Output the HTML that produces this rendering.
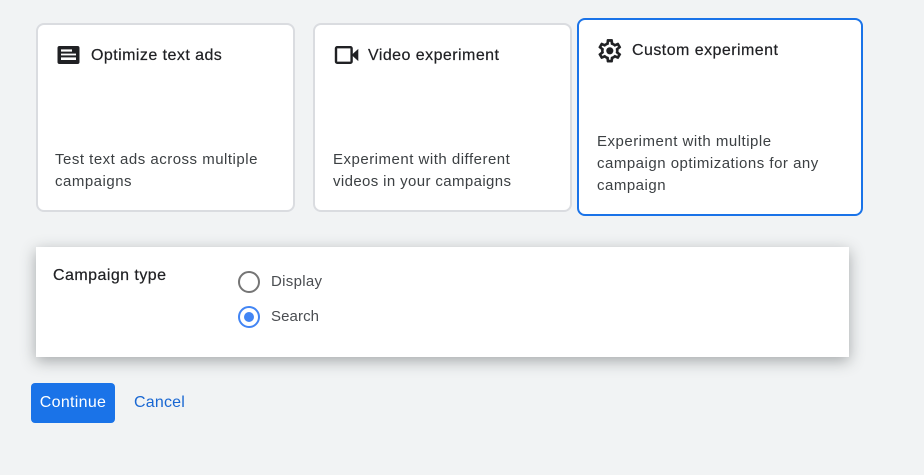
<!DOCTYPE html>
<html><head><meta charset="utf-8"><style>
html,body{margin:0;padding:0;width:924px;height:475px;overflow:hidden;background:#f1f3f4;font-family:"Liberation Sans",sans-serif}
div,span,svg{position:absolute;display:block;box-sizing:border-box;white-space:nowrap}
.card{background:#fff;border:2px solid #dadce0;border-radius:8px}
.t{font-size:16px;line-height:20px;color:#202124;letter-spacing:.45px;-webkit-text-stroke:.2px #202124}
.d{font-size:15px;line-height:22px;color:#3c4043;letter-spacing:.5px}
</style></head><body>
<div class="card" style="left:36px;top:23px;width:259px;height:189px"></div>
<div class="card" style="left:313px;top:23px;width:259px;height:189px"></div>
<div class="card" style="left:577px;top:18px;width:286px;height:198px;border-color:#1a73e8"></div>

<svg style="left:57px;top:45px" width="23" height="20" viewBox="0 0 23 20"><rect x="0.5" y="1" width="22" height="18" rx="2" fill="#202124"/><rect x="4" y="4.4" width="11" height="2.2" fill="#fff"/><rect x="4" y="8.6" width="15" height="1.8" fill="#fff"/><rect x="4" y="12.4" width="15" height="2.6" fill="#fff"/></svg>
<div class="t" style="left:91px;top:46px">Optimize text ads</div>
<div class="d" style="left:55px;top:149px">Test text ads across multiple</div>
<div class="d" style="left:55px;top:171px">campaigns</div>

<svg style="left:334px;top:45px" width="25" height="20" viewBox="0 0 25 20"><rect x="2" y="2.2" width="15.6" height="15.6" rx="1.2" fill="none" stroke="#202124" stroke-width="2.4"/><path d="M18 10 24 4.5V15.5Z" fill="#202124" stroke="#202124" stroke-width=".6"/></svg>
<div class="t" style="left:368px;top:46px">Video experiment</div>
<div class="d" style="left:333px;top:149px">Experiment with different</div>
<div class="d" style="left:333px;top:171px;letter-spacing:.38px">videos in your campaigns</div>

<svg style="left:596px;top:37px" width="27.6" height="27.6" viewBox="0 0 24 24"><path fill="#202124" stroke="#202124" stroke-width=".35" d="M19.43 12.98c.04-.32.07-.64.07-.98 0-.34-.03-.66-.07-.98l2.11-1.65c.19-.15.24-.42.12-.64l-2-3.46c-.09-.16-.26-.25-.44-.25-.06 0-.12.01-.17.03l-2.49 1c-.52-.4-1.08-.73-1.69-.98l-.38-2.65C14.46 2.18 14.25 2 14 2h-4c-.25 0-.46.18-.49.42l-.38 2.65c-.61.25-1.17.59-1.69.98l-2.49-1c-.06-.02-.12-.03-.18-.03-.17 0-.34.09-.43.25l-2 3.46c-.13.22-.07.49.12.64l2.11 1.65c-.04.32-.07.65-.07.98 0 .33.03.66.07.98l-2.11 1.65c-.19.15-.24.42-.12.64l2 3.46c.09.16.26.25.44.25.06 0 .12-.01.17-.03l2.49-1c.52.4 1.08.73 1.69.98l.38 2.65c.03.24.24.42.49.42h4c.25 0 .46-.18.49-.42l.38-2.65c.61-.25 1.17-.59 1.69-.98l2.49 1c.06.02.12.03.18.03.17 0 .34-.09.43-.25l2-3.46c.12-.22.07-.49-.12-.64l-2.11-1.65zm-1.98-1.71c.04.31.05.52.05.73 0 .21-.02.43-.05.73l-.14 1.13.89.7 1.08.84-.7 1.21-1.27-.51-1.04-.42-.9.68c-.43.32-.84.56-1.25.73l-1.06.43-.16 1.13-.2 1.35h-1.4l-.19-1.35-.16-1.13-1.06-.43c-.43-.18-.83-.41-1.23-.71l-.91-.7-1.06.43-1.27.51-.7-1.21 1.08-.84.89-.7-.14-1.13c-.03-.31-.05-.54-.05-.74s.02-.43.05-.73l.14-1.13-.89-.7-1.08-.84.7-1.21 1.27.51 1.04.42.9-.68c.43-.32.84-.56 1.25-.73l1.06-.43.16-1.13.2-1.35h1.39l.19 1.35.16 1.13 1.06.43c.43.18.83.41 1.23.71l.91.7 1.06-.43 1.27-.51.7 1.21-1.07.85-.89.7.14 1.13z"/><circle cx="12" cy="12" r="3.1" fill="#202124"/></svg>
<div class="t" style="left:632px;top:41px">Custom experiment</div>
<div class="d" style="left:597px;top:131px">Experiment with multiple</div>
<div class="d" style="left:597px;top:153px">campaign optimizations for any</div>
<div class="d" style="left:597px;top:175px">campaign</div>

<div style="left:36px;top:247px;width:813px;height:110px;background:#fff;box-shadow:0 4px 14px rgba(60,64,67,.42)"></div>
<div class="t" style="left:53px;top:266px">Campaign type</div>
<div style="left:237.5px;top:270.5px;width:22px;height:22px;border:2.4px solid #757575;border-radius:50%"></div>
<div class="d" style="left:271px;top:271px;color:#4a4d51;letter-spacing:.3px">Display</div>
<div style="left:237.5px;top:305.5px;width:22px;height:22px;border:2.4px solid #4285f4;border-radius:50%"></div>
<div style="left:243.5px;top:311.5px;width:10px;height:10px;background:#4285f4;border-radius:50%"></div>
<div class="d" style="left:271px;top:306px;color:#4a4d51;letter-spacing:.1px">Search</div>

<div style="left:31px;top:383px;width:84px;height:40px;background:#1a73e8;border-radius:4px"></div>
<div class="d" style="left:31px;top:392px;width:84px;text-align:center;color:#fff;font-size:16px;letter-spacing:.3px">Continue</div>
<div class="d" style="left:134px;top:392px;color:#1967d2;font-size:16px;letter-spacing:.2px">Cancel</div>
</body></html>
